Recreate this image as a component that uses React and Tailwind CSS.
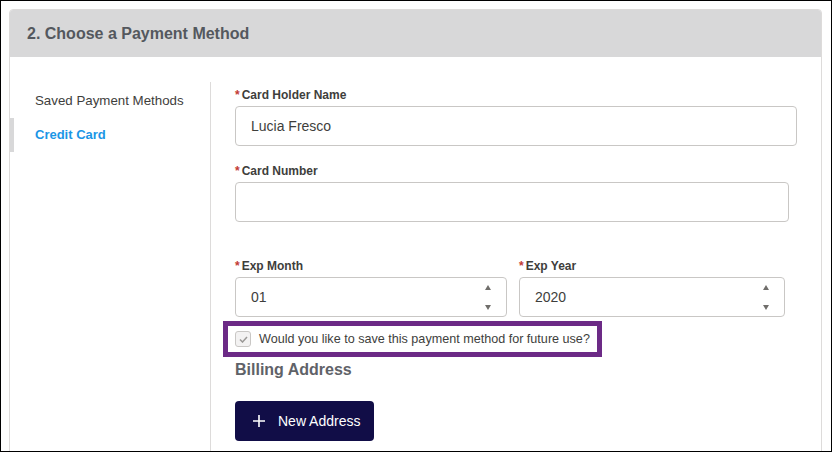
import React from "react";

function Label({ children }) {
  return (
    <div className="flex h-[18px] items-center text-[12px] font-bold text-[#3e3e3c]">
      <span className="mr-[2px] text-[#c23934]">*</span>
      {children}
    </div>
  );
}

function Spinner() {
  return (
    <div className="flex flex-col items-center gap-[15px] text-[#706e6b]">
      <svg width="6" height="5" viewBox="0 0 6 5"><path d="M3 0L6 5H0z" fill="currentColor" /></svg>
      <svg width="6" height="5" viewBox="0 0 6 5"><path d="M0 0h6L3 5z" fill="currentColor" /></svg>
    </div>
  );
}

export default function App() {
  return (
    <div className="h-[452px] w-[832px] overflow-hidden border border-black bg-white pl-2 pt-2 font-['Liberation_Sans',Arial,sans-serif]">
      <div className="flex h-[460px] w-[813px] flex-col rounded-t-[4px] border border-[#dddbda]">
        {/* header */}
        <div className="flex h-[47px] shrink-0 items-center rounded-t-[3px] bg-[#d8d8d9] px-[17px]">
          <h2 className="text-[16px] font-bold text-[#54585e]">2. Choose a Payment Method</h2>
        </div>

        <div className="flex flex-1 pt-[25px]">
          {/* nav */}
          <div className="w-[200px] shrink-0 pt-[2px]">
            <div className="flex h-[34px] items-center pl-[25px] text-[13.3px] text-[#3e3e3c]">Saved Payment Methods</div>
            <div className="flex h-[34px] items-center border-l-4 border-[#d8d8d9] pl-[21px] text-[13px] font-bold text-[#1b96e6]">Credit Card</div>
          </div>

          {/* form */}
          <div className="flex-1 border-l border-[#dddbda] pl-[24px] pt-[4px]">
            <Label>Card Holder Name</Label>
            <div className="mt-[2px] flex h-[40px] w-[562px] items-center rounded-[4px] border border-[#c9c7c5] px-[15px] text-[14px] text-[#3e3e3c]">
              Lucia Fresco
            </div>

            <div className="mt-[16px]">
              <Label>Card Number</Label>
            </div>
            <div className="mt-[2px] h-[40px] w-[554px] rounded-[4px] border border-[#c9c7c5]"></div>

            <div className="mt-[35px] flex gap-[12px]">
              <div className="w-[272px]">
                <Label>Exp Month</Label>
                <div className="mt-[2px] flex h-[40px] items-center justify-between rounded-[4px] border border-[#c9c7c5] pl-[15px] pr-[15px] text-[14px] text-[#3e3e3c]">
                  <span>01</span>
                  <Spinner />
                </div>
              </div>
              <div className="w-[266px]">
                <Label>Exp Year</Label>
                <div className="mt-[2px] flex h-[40px] items-center justify-between rounded-[4px] border border-[#c9c7c5] pl-[15px] pr-[15px] text-[14px] text-[#3e3e3c]">
                  <span>2020</span>
                  <Spinner />
                </div>
              </div>
            </div>

            <div className="-ml-[12px] mt-[4px] flex h-[36px] w-[379px] items-center gap-[8px] border-[5px] border-[#6c2a86] pl-[7px]">
              <div className="flex h-[16px] w-[16px] items-center justify-center rounded-[3px] border border-[#c9c7c5] bg-[#f3f2f2]">
                <svg width="9" height="7" viewBox="0 0 9 7"><path d="M1 3.5L3.5 6L8 1" fill="none" stroke="#9a9896" strokeWidth="1.5" /></svg>
              </div>
              <span className="text-[12.6px] text-[#3e3e3c]">Would you like to save this payment method for future use?</span>
            </div>

            <div className="mt-[3px] h-[20px] text-[16px] font-bold leading-[20px] text-[#5f6268]">Billing Address</div>

            <button className="mt-[21px] flex h-[40px] w-[139px] items-center rounded-[4px] bg-[#110d47] pl-[17px] text-[14px] text-white">
              <svg width="14" height="14" viewBox="0 0 14 14" className="mr-[12px]"><path d="M7 1v12M1 7h12" stroke="white" strokeWidth="1.6" /></svg>
              New Address
            </button>
          </div>
        </div>
      </div>
    </div>
  );
}
